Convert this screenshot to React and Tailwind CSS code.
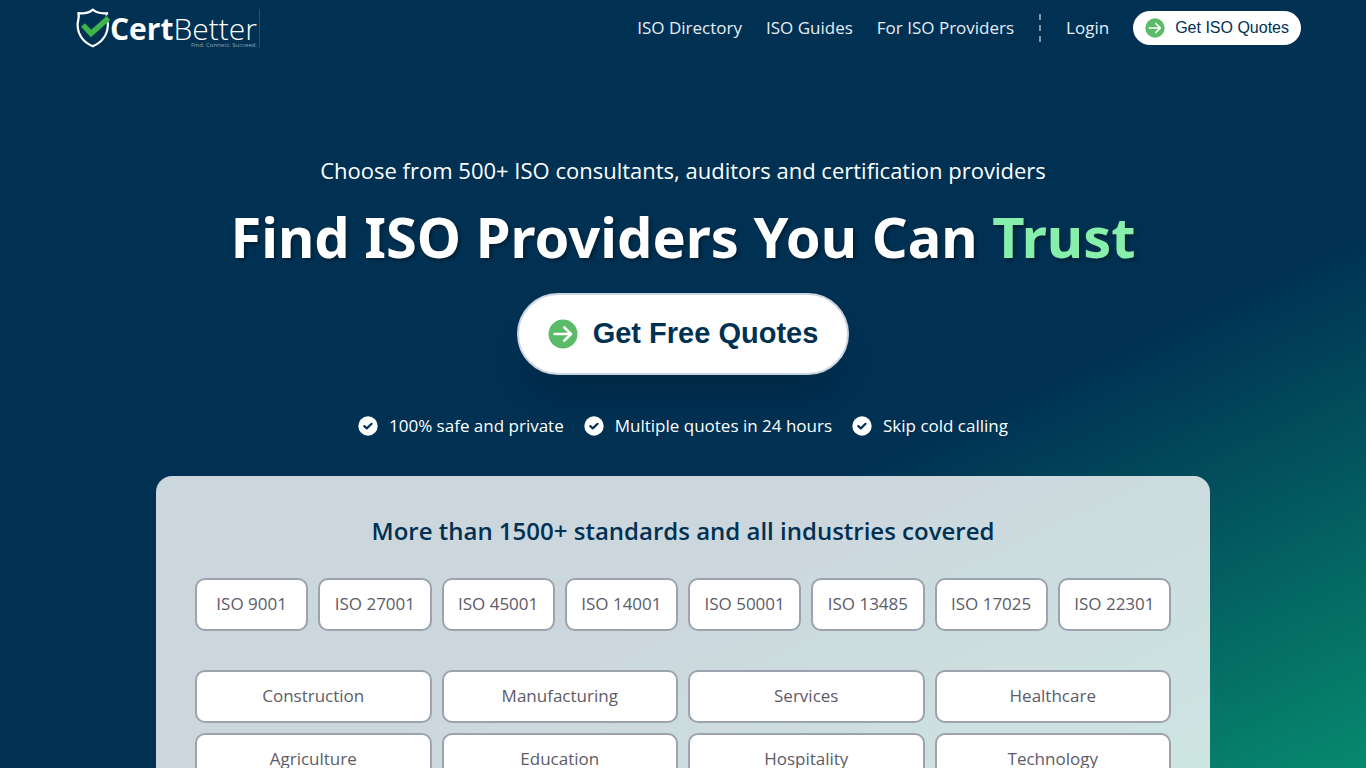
import React from 'react';

const navLinks = ['ISO Directory', 'ISO Guides', 'For ISO Providers'];

const perks = ['100% safe and private', 'Multiple quotes in 24 hours', 'Skip cold calling'];

const standards = [
    'ISO 9001',
    'ISO 27001',
    'ISO 45001',
    'ISO 14001',
    'ISO 50001',
    'ISO 13485',
    'ISO 17025',
    'ISO 22301',
];

const industries = [
    'Construction',
    'Manufacturing',
    'Services',
    'Healthcare',
    'Agriculture',
    'Education',
    'Hospitality',
    'Technology',
];

const ArrowIcon = ({ className }) => (
    <svg viewBox="0 0 30 30" className={className} aria-hidden="true">
        <circle cx="15" cy="15" r="14.5" fill="#5abb68" />
        <path
            d="M6.5 15H22.5M16.3 8.3L23 15L16.3 21.7"
            fill="none"
            stroke="#fff"
            strokeWidth="2.6"
            strokeLinecap="round"
            strokeLinejoin="round"
        />
    </svg>
);

const CheckIcon = () => (
    <svg viewBox="0 0 20 20" className="size-5" aria-hidden="true">
        <circle cx="10" cy="10" r="9.7" fill="#fff" />
        <path
            d="M6.3 10.1L8.8 12.4L13.6 7.8"
            fill="none"
            stroke="#003153"
            strokeWidth="2.2"
            strokeLinecap="round"
            strokeLinejoin="round"
        />
    </svg>
);

const Logo = () => (
    <a href="#" className="flex items-center text-white">
        <svg viewBox="0 0 34 40" className="h-10 w-[34px]" aria-hidden="true">
            <path
                d="M16.8 1.6C14 4.4 8.5 5.8 2.3 5.2C4 9 1.5 12 1.6 17C1.9 27 7 34 16.8 38.3C26.5 34 31.5 27 31.9 17C32 12 29.5 9 31.2 5.2C25 5.8 19.5 4.4 16.8 1.6Z"
                fill="none"
                stroke="#fff"
                strokeWidth="2.2"
                strokeLinejoin="round"
            />
            <path d="M10 16L16 23L34 8.5" fill="none" stroke="#003153" strokeWidth="6" />
            <path d="M7 17L15 25.5L32.5 10" fill="none" stroke="#3db54a" strokeWidth="5.4" />
        </svg>
        <span className="flex flex-col border-r border-[#24506f] pr-[2px]">
            <span className="text-[30px] leading-10">
                <b className="font-bold">Cert</b>
                <span className="font-light">Better</span>
            </span>
            <span className="-mt-[7px] text-right text-[6px] leading-[6px] text-[#8fa5b5]">
                Find. Connect. Succeed.
            </span>
        </span>
    </a>
);

const Tile = ({ label }) => (
    <button className="h-[53px] rounded-[10px] border-2 border-[#9ca3af] bg-white pb-px text-[17px] text-[#5c5c68]">
        {label}
    </button>
);

const App = () => {
    return (
        <div className="h-screen overflow-y-auto bg-[linear-gradient(155deg,#003153_62%,#078a6e_100%)] font-['Open_Sans',sans-serif] text-white [scrollbar-width:none]">
            <header className="flex h-14 items-center justify-between pr-[65px] pl-[76px]">
                <Logo />
                <nav className="flex items-center gap-6 text-[17px] font-medium text-[#e6edf3]">
                    {navLinks.map((link) => (
                        <a key={link} href="#">{link}</a>
                    ))}
                    <span className="mx-px h-7 border-l-2 border-dashed border-[#7f98a9]" />
                    <a href="#">Login</a>
                    <button className="flex h-[34px] items-center gap-[10px] rounded-full bg-white px-3 font-['Liberation_Sans',sans-serif] text-base font-normal text-[#003153]">
                        <ArrowIcon className="size-5" />
                        Get ISO Quotes
                    </button>
                </nav>
            </header>

            <main className="flex flex-col items-center px-6 pt-[98px]">
                <p className="text-[22px] leading-8">
                    Choose from 500+ ISO consultants, auditors and certification providers
                </p>
                <h1 className="mt-[15px] font-['Noto_Sans',sans-serif] text-[56px] leading-[70px] font-bold text-shadow-[2px_2px_4px_rgb(0_0_0/0.4)]">
                    Find ISO Providers You Can <span className="text-[#86efac]">Trust</span>
                </h1>
                <button className="mt-[22px] flex h-[82px] items-center gap-[15px] rounded-full border-2 border-[#cbd5e1] bg-white px-[29px] font-['Liberation_Sans',sans-serif] text-[29px] font-bold text-[#003153] shadow-2xl">
                    <ArrowIcon className="size-[30px]" />
                    Get Free Quotes
                </button>

                <ul className="mt-[37px] flex gap-5 text-[17px] leading-7">
                    {perks.map((perk) => (
                        <li key={perk} className="flex items-center gap-[11px]">
                            <CheckIcon />
                            {perk}
                        </li>
                    ))}
                </ul>

                <section className="mt-9 w-full max-w-[1054px] rounded-t-2xl bg-white/80 px-[39px] pt-9 pb-10">
                    <h2 className="text-center text-2xl leading-[38px] font-semibold text-[#003153]">
                        More than 1500+ standards and all industries covered
                    </h2>
                    <div className="mt-7 grid grid-cols-8 gap-[10px]">
                        {standards.map((name) => (
                            <Tile key={name} label={name} />
                        ))}
                    </div>
                    <div className="mt-[39px] grid grid-cols-4 gap-[10px]">
                        {industries.map((name) => (
                            <Tile key={name} label={name} />
                        ))}
                    </div>
                </section>
            </main>
        </div>
    );
};

export default App;
